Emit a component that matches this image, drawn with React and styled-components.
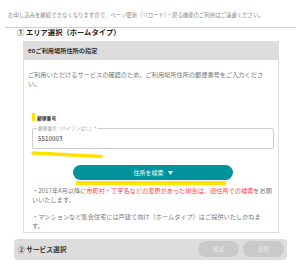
import React from "react";
import styled, { createGlobalStyle } from "styled-components";

const GlobalStyle = createGlobalStyle`
  body {
    margin: 0;
    background: #fff;
    font-family: "Noto Sans CJK JP", "Noto Sans", sans-serif;
  }
`;

const Page = styled.div`
  width: 300px;
  height: 264px;
  overflow: hidden;
`;

const Notice = styled.p`
  margin: 0;
  padding: 11px 0 0 8px;
  font-size: 5.4px;
  line-height: 8px;
  color: #888;
  white-space: nowrap;
`;

const Divider = styled.hr`
  margin: 8px 4px 0 5px;
  border: 0;
  border-top: 1px solid #cfcfcf;
`;

const StepTitle = styled.h2`
  margin: 0;
  padding-left: 17px;
  font-size: 7.3px;
  line-height: 8px;
  font-weight: 700;
  color: #222;
`;

const Card = styled.section`
  margin: 5px 21px 0 23px;
`;

const CardHeader = styled.div`
  height: 19px;
  display: flex;
  align-items: center;
  padding-left: 5px;
  background: #dddddd;
  font-size: 6.2px;
  font-weight: 700;
  color: #333;
`;

const CardBody = styled.div`
  border: 1px solid #dddddd;
  border-top: 0;
  padding: 10px 4px 2px 4px;
`;

const Intro = styled.p`
  margin: 0;
  font-size: 6.2px;
  line-height: 9px;
  color: #777;
`;

const FormArea = styled.div`
  padding-left: 4px;
`;

const FieldLabel = styled.div`
  margin-top: 25px;
  height: 8px;
  display: flex;
  align-items: center;
  gap: 2px;
  font-size: 4.8px;
  font-weight: 700;
  color: #333;

  &::before {
    content: "";
    width: 3px;
    height: 8px;
    background: #ffe100;
  }
`;

const InputBox = styled.div`
  position: relative;
  margin-top: 7px;
  height: 21px;
  box-sizing: border-box;
  border: 1px solid #cccccc;
  border-radius: 2px;
  padding-left: 5px;
  font-size: 6.3px;
  line-height: 19px;
  color: #333;
`;

const FloatLabel = styled.span`
  position: absolute;
  top: -3px;
  left: 4px;
  padding: 0 1px;
  background: #fff;
  font-size: 4.7px;
  line-height: 5px;
  color: #999;
`;

const Stroke = styled.svg`
  display: block;
  margin: 2px 0 0 -1px;
`;

const SearchButton = styled.button`
  display: flex;
  align-items: center;
  justify-content: center;
  gap: 4px;
  margin: 6px 0 0 41px;
  width: 160px;
  height: 15px;
  padding: 0;
  border: none;
  border-radius: 8px;
  background: #00939c;
  color: #fff;
  font-family: inherit;
  font-size: 6px;
`;

const Highlight = styled.div`
  margin: 1px 0 0 44px;
  width: 150px;
  height: 4px;
  background: #ffe400;
`;

const Notes = styled.ul`
  margin: 0;
  padding: 0 2px 0 0;
  list-style: none;
`;

const Note = styled.li`
  margin-top: ${(p) => (p.$first ? "0.5px" : "8px")};
  font-size: 6.2px;
  line-height: 9px;
  color: #777;
`;

const Red = styled.span`
  color: #ff3b3b;
`;

const StepBar = styled.div`
  margin: 6px 13px 0 14px;
  height: 21px;
  display: flex;
  align-items: center;
  justify-content: space-between;
  padding: 0 3px 0 4px;
  background: #dddddd;
  border-radius: 4px;
`;

const StepBarTitle = styled.span`
  font-size: 6.7px;
  font-weight: 700;
  color: #333;
`;

const PillGroup = styled.div`
  display: flex;
  gap: 4px;
`;

const Pill = styled.span`
  width: 41px;
  height: 16px;
  display: flex;
  align-items: center;
  justify-content: center;
  border-radius: 8px;
  background: #c9c9c9;
  color: #ececec;
  font-size: 5.5px;
`;

export default function App() {
  return (
    <Page>
      <GlobalStyle />
      <Notice>
        お申し込みを継続できなくなりますので、ページ更新（リロード）・戻る機能のご利用はご遠慮ください。
      </Notice>
      <Divider />
      <StepTitle>① エリア選択（ホームタイプ）</StepTitle>
      <Card>
        <CardHeader>eoご利用場所住所の指定</CardHeader>
        <CardBody>
          <Intro>
            ご利用いただけるサービスの確認のため、ご利用場所住所の郵便番号をご入力ください。
          </Intro>
          <FormArea>
            <FieldLabel>郵便番号</FieldLabel>
            <InputBox>
              <FloatLabel>郵便番号（ハイフンなし）*</FloatLabel>
              5510003
            </InputBox>
            <Stroke width="72" height="8" viewBox="0 0 72 8">
              <path
                d="M2 2 C 25 3, 50 4.5, 70 5.5"
                stroke="#ffe100"
                strokeWidth="3.5"
                strokeLinecap="round"
                fill="none"
              />
            </Stroke>
            <SearchButton>
              住所を検索
              <svg width="5" height="4" viewBox="0 0 5 4">
                <path d="M0 0 H5 L2.5 4 Z" fill="#fff" />
              </svg>
            </SearchButton>
            <Highlight />
            <Notes>
              <Note $first>
                ・2017年4月以降に
                <Red>市町村・丁字名などの変更があった場合は、旧住所での検索</Red>
                をお願いいたします。
              </Note>
              <Note>
                ・マンションなど集合住宅には戸建て向け（ホームタイプ）はご提供いたしかねます。
              </Note>
            </Notes>
          </FormArea>
        </CardBody>
      </Card>
      <StepBar>
        <StepBarTitle>② サービス選択</StepBarTitle>
        <PillGroup>
          <Pill>確認</Pill>
          <Pill>変更</Pill>
        </PillGroup>
      </StepBar>
    </Page>
  );
}
